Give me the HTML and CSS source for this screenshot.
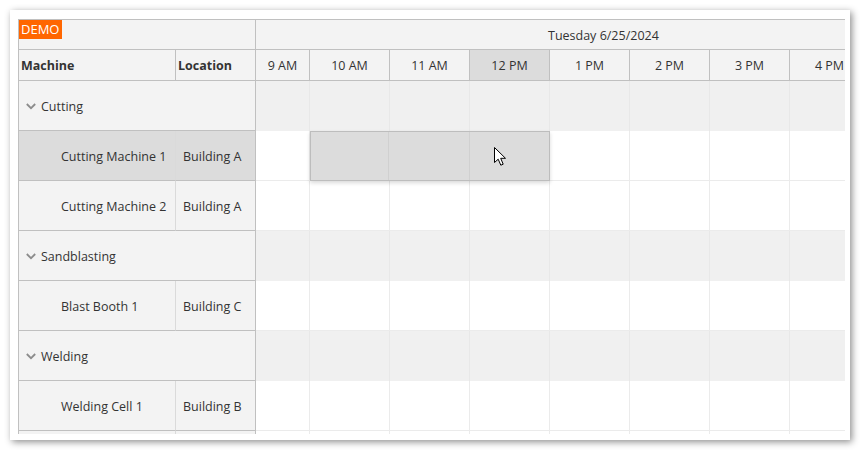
FILE: index.html
```html
<!DOCTYPE html>
<html>
<head>
    <title>Scheduler</title>
    <link rel="stylesheet" href="styles.css">
</head>
<body>
    <div class="Frame">
        <div class="Scheduler">
            <!-- header row 1 -->
            <div class="Corner"><span class="Demo">DEMO</span></div>
            <div class="DayHeader">Tuesday 6/25/2024</div>

            <!-- header row 2 -->
            <div class="ColHeader">Machine</div>
            <div class="ColHeader">Location</div>
            <div class="TimeHeader">9 AM</div>
            <div class="TimeHeader">10 AM</div>
            <div class="TimeHeader">11 AM</div>
            <div class="TimeHeader Hover">12 PM</div>
            <div class="TimeHeader">1 PM</div>
            <div class="TimeHeader">2 PM</div>
            <div class="TimeHeader">3 PM</div>
            <div class="TimeHeader">4 PM</div>

            <!-- Cutting -->
            <div class="GroupHeader"><svg class="Chevron" width="10" height="7" viewBox="0 0 10 7"><path d="M0.8 1 L5 5.2 L9.2 1"/></svg>Cutting</div>
            <div class="Cell Group"></div><div class="Cell Group"></div><div class="Cell Group"></div><div class="Cell Group"></div>
            <div class="Cell Group"></div><div class="Cell Group"></div><div class="Cell Group"></div><div class="Cell Group"></div>

            <div class="RowName Selected">Cutting Machine 1</div>
            <div class="RowLocation Selected">Building A</div>
            <div class="Cell"></div><div class="Cell"></div><div class="Cell"></div><div class="Cell"></div>
            <div class="Cell"></div><div class="Cell"></div><div class="Cell"></div><div class="Cell"></div>

            <div class="RowName">Cutting Machine 2</div>
            <div class="RowLocation">Building A</div>
            <div class="Cell"></div><div class="Cell"></div><div class="Cell"></div><div class="Cell"></div>
            <div class="Cell"></div><div class="Cell"></div><div class="Cell"></div><div class="Cell"></div>

            <!-- Sandblasting -->
            <div class="GroupHeader"><svg class="Chevron" width="10" height="7" viewBox="0 0 10 7"><path d="M0.8 1 L5 5.2 L9.2 1"/></svg>Sandblasting</div>
            <div class="Cell Group"></div><div class="Cell Group"></div><div class="Cell Group"></div><div class="Cell Group"></div>
            <div class="Cell Group"></div><div class="Cell Group"></div><div class="Cell Group"></div><div class="Cell Group"></div>

            <div class="RowName">Blast Booth 1</div>
            <div class="RowLocation">Building C</div>
            <div class="Cell"></div><div class="Cell"></div><div class="Cell"></div><div class="Cell"></div>
            <div class="Cell"></div><div class="Cell"></div><div class="Cell"></div><div class="Cell"></div>

            <!-- Welding -->
            <div class="GroupHeader"><svg class="Chevron" width="10" height="7" viewBox="0 0 10 7"><path d="M0.8 1 L5 5.2 L9.2 1"/></svg>Welding</div>
            <div class="Cell Group"></div><div class="Cell Group"></div><div class="Cell Group"></div><div class="Cell Group"></div>
            <div class="Cell Group"></div><div class="Cell Group"></div><div class="Cell Group"></div><div class="Cell Group"></div>

            <div class="RowName">Welding Cell 1</div>
            <div class="RowLocation">Building B</div>
            <div class="Cell"></div><div class="Cell"></div><div class="Cell"></div><div class="Cell"></div>
            <div class="Cell"></div><div class="Cell"></div><div class="Cell"></div><div class="Cell"></div>

            <!-- next row, scrolled out of view -->
            <div class="RowName"></div>
            <div class="RowLocation"></div>
            <div class="Cell"></div><div class="Cell"></div><div class="Cell"></div><div class="Cell"></div>
            <div class="Cell"></div><div class="Cell"></div><div class="Cell"></div><div class="Cell"></div>

            <!-- time range being selected -->
            <div class="Selection">
                <span></span><span></span><span></span>
            </div>

            <svg class="Cursor" width="13" height="20" viewBox="0 0 13 20">
                <path d="M0.5 0.5 L0.5 15.5 L4.2 12.2 L6.8 18.2 L9.2 17.2 L6.7 11.3 L11.5 11.3 Z"/>
            </svg>
        </div>
    </div>
</body>
</html>
```

FILE: styles.css
```css
body {
    margin: 0;
    background: #ffffff;
    font-family: 'Segoe UI', 'Open Sans', 'Noto Sans', sans-serif;
    font-size: 12.5px;
    color: #333333;
}

.Frame {
    width: 840px;
    height: 430px;
    margin: 10px;
    padding: 9px 0 0 8px;
    box-sizing: border-box;
    background: #ffffff;
    box-shadow: 2px 2px 7px rgba(0, 0, 0, 0.45);
}

.Scheduler {
    position: relative;
    width: 827px;
    height: 415px;
    box-sizing: border-box;
    overflow: hidden;

    border-left: 1px solid #c0c0c0;
    border-top: 1px solid #c0c0c0;

    display: grid;
    grid-template-columns: 157px 80px 54px repeat(7, 80px);
    grid-template-rows: 30px 31px repeat(8, 50px);
}

.Scheduler > div {
    box-sizing: border-box;
    display: flex;
    align-items: center;
    white-space: nowrap;
    padding-top: 1px;
}

.Corner {
    grid-column: 1 / 3;
    align-items: flex-start !important;
    padding-top: 0 !important;
    background: #f3f3f3;
    border-right: 1px solid #c0c0c0;
    border-bottom: 1px solid #c0c0c0;
}

.Demo {
    background: #ff6600;
    color: #ffffff;
    font-size: 13px;
    line-height: 19px;
    padding: 0 3px 0 2px;
}

.DayHeader {
    grid-column: 3 / 11;
    background: #f3f3f3;
    border-bottom: 1px solid #c0c0c0;
    padding-left: 292px;
}

.ColHeader {
    background: #f3f3f3;
    font-weight: bold;
    padding-left: 2px;
    border-right: 1px solid #c0c0c0;
    border-bottom: 1px solid #c0c0c0;
}

.TimeHeader {
    justify-content: center;
    background: #f3f3f3;
    border-right: 1px solid #c0c0c0;
    border-bottom: 1px solid #c0c0c0;
}

.TimeHeader.Hover {
    background: #dcdcdc;
}

.GroupHeader {
    grid-column: 1 / 3;
    background: #f3f3f3;
    padding-left: 7px;
    gap: 5px;
    border-right: 1px solid #c0c0c0;
    border-bottom: 1px solid #c0c0c0;
}

.Chevron path {
    fill: none;
    stroke: #8c8c8c;
    stroke-width: 1.8;
}

.RowName {
    background: #f3f3f3;
    padding-left: 42px;
    border-right: 1px solid #dadada;
    border-bottom: 1px solid #c0c0c0;
}

.RowLocation {
    background: #f3f3f3;
    padding-left: 7px;
    border-right: 1px solid #c0c0c0;
    border-bottom: 1px solid #c0c0c0;
}

.Selected {
    background: #dcdcdc;
}

.Cell {
    background: #ffffff;
    border-right: 1px solid #ebebeb;
    border-bottom: 1px solid #ebebeb;
}

.Cell.Group {
    background: #f0f0f0;
    border-right: 1px solid #e8e8e8;
    border-bottom: none;
}

.Selection {
    position: absolute;
    left: 291px;
    top: 111px;
    width: 240px;
    height: 50px;
    box-sizing: border-box;
    background: #dcdcdc;
    border: 1px solid #bdbdbd;
    box-shadow: 0px 2px 4px rgba(0, 0, 0, 0.15);
    display: flex !important;
    align-items: stretch !important;
    padding-top: 0 !important;
}

.Selection span {
    width: 80px;
    border-right: 1px solid #d0d0d0;
}

.Selection span:first-child {
    width: 78px;
}

.Selection span:last-child {
    border-right: none;
}

.Cursor {
    position: absolute;
    left: 475px;
    top: 127px;
}

.Cursor path {
    fill: #ffffff;
    stroke: #000000;
    stroke-width: 1;
    stroke-linejoin: miter;
}
```
